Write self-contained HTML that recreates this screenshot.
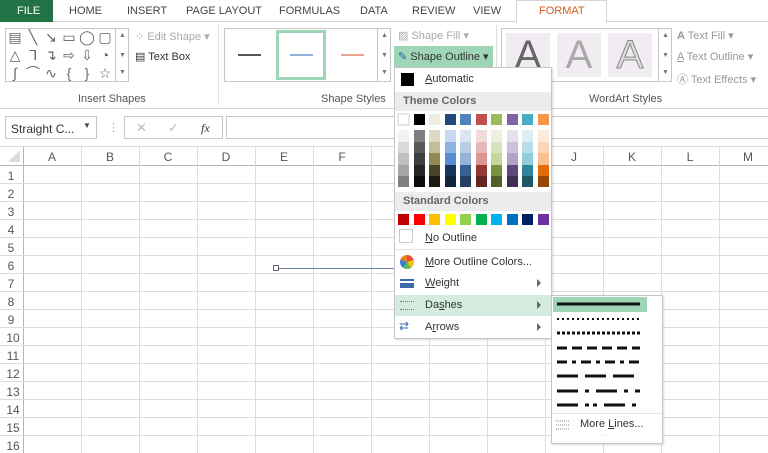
<!DOCTYPE html><html><head><meta charset="utf-8"><style>
*{margin:0;padding:0;box-sizing:border-box}
body{width:768px;height:453px;overflow:hidden;background:#fff;font-family:"Liberation Sans",sans-serif;position:relative;color:#444}
.a{position:absolute}
.t{font-size:11px;white-space:nowrap}
.mi{position:absolute;left:0;width:156px;height:21px;font-size:11px;color:#333}
.mi span.l{position:absolute;left:30px;top:4px}
.arr{position:absolute;left:142px;top:6px;width:0;height:0;border-left:4px solid #666;border-top:4px solid transparent;border-bottom:4px solid transparent}
.gi{position:absolute;width:18px;height:18px;font-size:14px;line-height:18px;text-align:center;color:#666}
.sb{position:absolute;font-size:7px;color:#777}
</style></head><body>
<!-- tabs -->
<div class="a" style="left:0;top:0;width:768px;height:22px;background:#fff;border-bottom:1px solid #d5d5d5"></div>
<div class="a" style="left:0;top:0;width:53px;height:22px;background:#217346"></div>
<div class="a t" style="left:17px;top:5px;color:#fff">FILE</div>
<div class="a t" style="left:69px;top:5px">HOME</div>
<div class="a t" style="left:127px;top:5px">INSERT</div>
<div class="a t" style="left:186px;top:5px">PAGE LAYOUT</div>
<div class="a t" style="left:279px;top:5px">FORMULAS</div>
<div class="a t" style="left:360px;top:5px">DATA</div>
<div class="a t" style="left:412px;top:5px">REVIEW</div>
<div class="a t" style="left:473px;top:5px">VIEW</div>
<div class="a" style="left:516px;top:0;width:91px;height:23px;background:#fff;border:1px solid #d5d5d5;border-bottom:none"></div>
<div class="a t" style="left:539px;top:5px;color:#d35c1f">FORMAT</div>
<!-- ribbon -->
<div class="a" style="left:0;top:108px;width:768px;height:1px;background:#d5d5d5"></div>
<div class="a" style="left:5px;top:28px;width:124px;height:54px;border:1px solid #c6c6c6"></div>
<div class="a" style="left:115px;top:28px;width:1px;height:54px;background:#c6c6c6"></div>
<div class="sb" style="left:119px;top:32px">▲</div><div class="sb" style="left:119px;top:52px">▼</div><div class="sb" style="left:119px;top:69px">▼</div>
<div class="gi" style="left:6px;top:28px">▤</div><div class="gi" style="left:24px;top:28px">╲</div><div class="gi" style="left:42px;top:28px">↘</div><div class="gi" style="left:60px;top:28px">▭</div><div class="gi" style="left:78px;top:28px">◯</div><div class="gi" style="left:96px;top:28px">▢</div>
<div class="gi" style="left:6px;top:46px">△</div><div class="gi" style="left:24px;top:46px">ᒣ</div><div class="gi" style="left:42px;top:46px">↴</div><div class="gi" style="left:60px;top:46px">⇨</div><div class="gi" style="left:78px;top:46px">⇩</div><div class="gi" style="left:96px;top:46px">◔</div>
<div class="gi" style="left:6px;top:64px">∫</div><div class="gi" style="left:24px;top:64px">⌒</div><div class="gi" style="left:42px;top:64px">∿</div><div class="gi" style="left:60px;top:64px">{</div><div class="gi" style="left:78px;top:64px">}</div><div class="gi" style="left:96px;top:64px">☆</div>
<div class="a t" style="left:135px;top:30px;color:#aaa">⁘ Edit Shape ▾</div>
<div class="a t" style="left:135px;top:50px;color:#333">▤ Text Box</div>
<div class="a t" style="left:78px;top:93px;color:#555">Insert Shapes</div>
<div class="a" style="left:218px;top:25px;width:1px;height:80px;background:#e0e0e0"></div>
<div class="a" style="left:224px;top:28px;width:167px;height:54px;border:1px solid #c6c6c6"></div>
<div class="a" style="left:377px;top:28px;width:1px;height:54px;background:#c6c6c6"></div>
<div class="sb" style="left:381px;top:32px">▲</div><div class="sb" style="left:381px;top:52px">▼</div><div class="sb" style="left:381px;top:69px">▼</div>
<div class="a" style="left:238px;top:54px;width:23px;height:2px;background:#555"></div>
<div class="a" style="left:276px;top:30px;width:50px;height:50px;border:3px solid #9fd5b7"></div>
<div class="a" style="left:290px;top:54px;width:23px;height:2px;background:#8eb2dc"></div>
<div class="a" style="left:341px;top:54px;width:23px;height:2px;background:#e8a490"></div>
<div class="a t" style="left:321px;top:93px;color:#555">Shape Styles</div>
<div class="a t" style="left:398px;top:29px;color:#aaa">▨ Shape Fill ▾</div>
<div class="a" style="left:394px;top:46px;width:99px;height:21px;background:#9fd5b7"></div>
<div class="a t" style="left:398px;top:50px;color:#333"><span style="color:#2a5caa">✎</span> Shape Outline ▾</div>
<div class="a" style="left:496px;top:25px;width:1px;height:80px;background:#e0e0e0"></div>
<div class="a" style="left:501px;top:28px;width:171px;height:54px;border:1px solid #c6c6c6"></div>
<div class="a" style="left:658px;top:28px;width:1px;height:54px;background:#c6c6c6"></div>
<div class="sb" style="left:662px;top:32px">▲</div><div class="sb" style="left:662px;top:52px">▼</div><div class="sb" style="left:662px;top:69px">▼</div>
<div class="a" style="left:506px;top:33px;width:44px;height:44px;background:#f1ecf1;font-size:40px;line-height:44px;text-align:center;color:#666">A</div>
<div class="a" style="left:557px;top:33px;width:44px;height:44px;background:#f1ecf1;font-size:40px;line-height:44px;text-align:center;color:#aaa">A</div>
<div class="a" style="left:608px;top:33px;width:44px;height:44px;background:#f1ecf1;font-size:40px;line-height:44px;text-align:center;color:#ddd;-webkit-text-stroke:1px #888">A</div>
<div class="a t" style="left:677px;top:29px;color:#999"><b>A</b> Text Fill ▾</div>
<div class="a t" style="left:677px;top:50px;color:#999"><u>A</u> Text Outline ▾</div>
<div class="a t" style="left:677px;top:71px;color:#999">Ⓐ Text Effects ▾</div>
<div class="a t" style="left:589px;top:93px;color:#555">WordArt Styles</div>
<!-- formula bar -->
<div class="a" style="left:5px;top:116px;width:92px;height:23px;border:1px solid #c6c6c6"></div>
<div class="a t" style="left:11px;top:122px;font-size:12px;color:#333">Straight C...</div>
<div class="a t" style="left:83px;top:121px;font-size:8px">▼</div>
<div class="a t" style="left:108px;top:121px;color:#aaa">⋮</div>
<div class="a" style="left:124px;top:116px;width:99px;height:23px;border:1px solid #c6c6c6"></div>
<div class="a t" style="left:136px;top:120px;color:#bbb;font-size:13px">✕</div>
<div class="a t" style="left:168px;top:120px;color:#bbb;font-size:13px">✓</div>
<div class="a t" style="left:201px;top:121px;color:#333;font-style:italic;font-family:'Liberation Serif',serif;font-size:12px">fx</div>
<div class="a" style="left:226px;top:116px;width:560px;height:23px;border:1px solid #c6c6c6"></div>
<!-- grid -->
<svg class="a" style="left:0;top:0" width="768" height="453">
<g stroke="#dadada" stroke-width="1">
<line x1="0" y1="146.5" x2="768" y2="146.5"/>
<line x1="0" y1="165.5" x2="768" y2="165.5" stroke="#b5b5b5"/>
<line x1="23.5" y1="147" x2="23.5" y2="453" stroke="#b5b5b5"/>
</g>
<g stroke="#dcdcdc">
<line x1="81.5" y1="147" x2="81.5" y2="453"/><line x1="139.5" y1="147" x2="139.5" y2="453"/><line x1="197.5" y1="147" x2="197.5" y2="453"/><line x1="255.5" y1="147" x2="255.5" y2="453"/><line x1="313.5" y1="147" x2="313.5" y2="453"/><line x1="371.5" y1="147" x2="371.5" y2="453"/><line x1="429.5" y1="147" x2="429.5" y2="453"/><line x1="487.5" y1="147" x2="487.5" y2="453"/><line x1="545.5" y1="147" x2="545.5" y2="453"/><line x1="603.5" y1="147" x2="603.5" y2="453"/><line x1="661.5" y1="147" x2="661.5" y2="453"/><line x1="719.5" y1="147" x2="719.5" y2="453"/>
<line x1="0" y1="183.5" x2="768" y2="183.5"/><line x1="0" y1="201.5" x2="768" y2="201.5"/><line x1="0" y1="219.5" x2="768" y2="219.5"/><line x1="0" y1="237.5" x2="768" y2="237.5"/><line x1="0" y1="255.5" x2="768" y2="255.5"/><line x1="0" y1="273.5" x2="768" y2="273.5"/><line x1="0" y1="291.5" x2="768" y2="291.5"/><line x1="0" y1="309.5" x2="768" y2="309.5"/><line x1="0" y1="327.5" x2="768" y2="327.5"/><line x1="0" y1="345.5" x2="768" y2="345.5"/><line x1="0" y1="363.5" x2="768" y2="363.5"/><line x1="0" y1="381.5" x2="768" y2="381.5"/><line x1="0" y1="399.5" x2="768" y2="399.5"/><line x1="0" y1="417.5" x2="768" y2="417.5"/><line x1="0" y1="435.5" x2="768" y2="435.5"/>
</g>
<polygon points="8,162 20,150 20,162" fill="#dcdcdc"/>
<g font-family="Liberation Sans" font-size="12" fill="#555" text-anchor="middle">
<text x="52" y="161">A</text><text x="110" y="161">B</text><text x="168" y="161">C</text><text x="226" y="161">D</text><text x="284" y="161">E</text><text x="342" y="161">F</text><text x="574" y="161">J</text><text x="632" y="161">K</text><text x="690" y="161">L</text><text x="748" y="161">M</text>
<text x="11" y="180">1</text><text x="11" y="198">2</text><text x="11" y="216">3</text><text x="11" y="234">4</text><text x="11" y="252">5</text><text x="11" y="270">6</text><text x="11" y="288">7</text><text x="11" y="306">8</text><text x="11" y="324">9</text><text x="13" y="342">10</text><text x="13" y="360">11</text><text x="13" y="378">12</text><text x="13" y="396">13</text><text x="13" y="414">14</text><text x="13" y="432">15</text><text x="13" y="450">16</text>
</g>
<line x1="279" y1="268.5" x2="395" y2="268.5" stroke="#6a84a8"/>
<rect x="273.5" y="265.5" width="5" height="5" fill="#fff" stroke="#666"/>
</svg>
<!-- menu -->
<div class="a" style="left:394px;top:67px;width:158px;height:272px;background:#fff;border:1px solid #c6c6c6;box-shadow:1px 1px 2px rgba(0,0,0,.15)">
 <div class="a" style="left:6px;top:5px;width:13px;height:13px;background:#000"></div>
 <div class="a t" style="left:30px;top:5px;color:#333"><u>A</u>utomatic</div>
 <div class="a" style="left:0;top:24px;width:156px;height:19px;background:#ececec"></div>
 <div class="a t" style="left:8px;top:27px;font-weight:bold;color:#666">Theme Colors</div>
 <div class="a" style="left:0;top:124px;width:156px;height:19px;background:#ececec"></div>
 <div class="a t" style="left:8px;top:127px;font-weight:bold;color:#666">Standard Colors</div>
 <div class="a" style="left:4px;top:161px;width:14px;height:14px;border:1px solid #ccc"></div>
 <div class="a t" style="left:30px;top:164px;color:#333"><u>N</u>o Outline</div>
 <div class="a" style="left:0;top:181px;width:156px;height:1px;background:#e3e3e3"></div>
 <div class="mi" style="top:184px"><div class="a" style="left:5px;top:3px;width:14px;height:14px;border-radius:50%;background:conic-gradient(#e74c3c 0 20%,#f1c40f 0 40%,#5cb85c 0 60%,#3a7bd5 0 80%,#e67e22 0)"></div><span class="l"><u>M</u>ore Outline Colors...</span></div>
 <div class="mi" style="top:205px"><div class="a" style="left:5px;top:6px;width:14px;height:9px;border-top:2px solid #3a6aa8;border-bottom:3px solid #3a6aa8"></div><div class="a" style="left:5px;top:10px;width:14px;height:2px;background:#3a6aa8"></div><span class="l"><u>W</u>eight</span><div class="arr"></div></div>
 <div class="mi" style="top:227px;background:#d3ecdf"><div class="a" style="left:5px;top:6px;width:14px;height:9px;border-top:1px dotted #777;border-bottom:1px dotted #777"></div><span class="l">Da<u>s</u>hes</span><div class="arr"></div></div>
 <div class="mi" style="top:249px"><span class="a" style="left:4px;top:2px;color:#3a6aa8;font-size:12px">⇄</span><span class="l">A<u>r</u>rows</span><div class="arr"></div></div>
</div>
<!-- submenu -->
<div class="a" style="left:551px;top:295px;width:112px;height:149px;background:#fff;border:1px solid #c6c6c6;box-shadow:1px 1px 2px rgba(0,0,0,.15)">
 <div class="a" style="left:1px;top:1px;width:94px;height:15px;background:#9fd5b7"></div>
 <svg class="a" style="left:0;top:0" width="110" height="147"><g stroke="#111">
 <line x1="5" y1="8" x2="88" y2="8" stroke-width="3"/>
 <line x1="5" y1="23" x2="88" y2="23" stroke-width="2" stroke-dasharray="2 3"/>
 <line x1="5" y1="37" x2="88" y2="37" stroke-width="3" stroke-dasharray="3 2"/>
 <line x1="5" y1="52" x2="88" y2="52" stroke-width="3" stroke-dasharray="10 5"/>
 <line x1="5" y1="66" x2="88" y2="66" stroke-width="3" stroke-dasharray="10 5 4 5"/>
 <line x1="5" y1="80" x2="88" y2="80" stroke-width="3" stroke-dasharray="21 7"/>
 <line x1="5" y1="95" x2="88" y2="95" stroke-width="3" stroke-dasharray="21 7 4 7"/>
 <line x1="5" y1="109" x2="88" y2="109" stroke-width="3" stroke-dasharray="21 7 4 4 4 7"/>
 </g><line x1="0" y1="117.5" x2="110" y2="117.5" stroke="#e3e3e3"/>
 <g stroke="#888" stroke-dasharray="1 1"><line x1="4" y1="125" x2="17" y2="125"/><line x1="4" y1="129" x2="17" y2="129"/><line x1="4" y1="133" x2="17" y2="133"/></g></svg>
 <div class="a t" style="left:28px;top:122px;color:#333">More <u>L</u>ines...</div>
 <div class="a t" style="left:46px;top:136px;color:#bbb;font-size:7px">····</div>
</div>
<svg class="a" style="left:0;top:0;pointer-events:none" width="768" height="453">
<g>
<rect x="398" y="114" width="11" height="11" fill="#fff" stroke="#ccc"/>
<rect x="414" y="114" width="11" height="11" fill="#000"/>
<rect x="429" y="114" width="11" height="11" fill="#eeece1"/>
<rect x="445" y="114" width="11" height="11" fill="#1f497d"/>
<rect x="460" y="114" width="11" height="11" fill="#4f81bd"/>
<rect x="476" y="114" width="11" height="11" fill="#c0504d"/>
<rect x="491" y="114" width="11" height="11" fill="#9bbb59"/>
<rect x="507" y="114" width="11" height="11" fill="#8064a2"/>
<rect x="522" y="114" width="11" height="11" fill="#4bacc6"/>
<rect x="538" y="114" width="11" height="11" fill="#f79646"/>
</g>
<g>
<rect x="398" y="214" width="11" height="11" fill="#c00000"/>
<rect x="414" y="214" width="11" height="11" fill="#ff0000"/>
<rect x="429" y="214" width="11" height="11" fill="#ffc000"/>
<rect x="445" y="214" width="11" height="11" fill="#ffff00"/>
<rect x="460" y="214" width="11" height="11" fill="#92d050"/>
<rect x="476" y="214" width="11" height="11" fill="#00b050"/>
<rect x="491" y="214" width="11" height="11" fill="#00b0f0"/>
<rect x="507" y="214" width="11" height="11" fill="#0070c0"/>
<rect x="522" y="214" width="11" height="11" fill="#002060"/>
<rect x="538" y="214" width="11" height="11" fill="#7030a0"/>
</g>
<!-- shade blocks -->
<g>
<rect x="398" y="130" width="11" height="12" fill="#f2f2f2"/><rect x="398" y="142" width="11" height="11" fill="#d9d9d9"/><rect x="398" y="153" width="11" height="12" fill="#bfbfbf"/><rect x="398" y="165" width="11" height="11" fill="#a6a6a6"/><rect x="398" y="176" width="11" height="11" fill="#808080"/>
<rect x="414" y="130" width="11" height="12" fill="#7f7f7f"/><rect x="414" y="142" width="11" height="11" fill="#595959"/><rect x="414" y="153" width="11" height="12" fill="#3f3f3f"/><rect x="414" y="165" width="11" height="11" fill="#262626"/><rect x="414" y="176" width="11" height="11" fill="#0d0d0d"/>
<rect x="429" y="130" width="11" height="12" fill="#ddd9c3"/><rect x="429" y="142" width="11" height="11" fill="#c4bd97"/><rect x="429" y="153" width="11" height="12" fill="#938953"/><rect x="429" y="165" width="11" height="11" fill="#494429"/><rect x="429" y="176" width="11" height="11" fill="#1d1b10"/>
<rect x="445" y="130" width="11" height="12" fill="#c6d9f0"/><rect x="445" y="142" width="11" height="11" fill="#8db3e2"/><rect x="445" y="153" width="11" height="12" fill="#548dd4"/><rect x="445" y="165" width="11" height="11" fill="#17365d"/><rect x="445" y="176" width="11" height="11" fill="#0f243e"/>
<rect x="460" y="130" width="11" height="12" fill="#dbe5f1"/><rect x="460" y="142" width="11" height="11" fill="#b8cce4"/><rect x="460" y="153" width="11" height="12" fill="#95b3d7"/><rect x="460" y="165" width="11" height="11" fill="#366092"/><rect x="460" y="176" width="11" height="11" fill="#244061"/>
<rect x="476" y="130" width="11" height="12" fill="#f2dcdb"/><rect x="476" y="142" width="11" height="11" fill="#e5b9b7"/><rect x="476" y="153" width="11" height="12" fill="#d99694"/><rect x="476" y="165" width="11" height="11" fill="#953734"/><rect x="476" y="176" width="11" height="11" fill="#632423"/>
<rect x="491" y="130" width="11" height="12" fill="#ebf1dd"/><rect x="491" y="142" width="11" height="11" fill="#d7e3bc"/><rect x="491" y="153" width="11" height="12" fill="#c3d69b"/><rect x="491" y="165" width="11" height="11" fill="#76923c"/><rect x="491" y="176" width="11" height="11" fill="#4f6128"/>
<rect x="507" y="130" width="11" height="12" fill="#e5e0ec"/><rect x="507" y="142" width="11" height="11" fill="#ccc1d9"/><rect x="507" y="153" width="11" height="12" fill="#b2a2c7"/><rect x="507" y="165" width="11" height="11" fill="#5f497a"/><rect x="507" y="176" width="11" height="11" fill="#3f3151"/>
<rect x="522" y="130" width="11" height="12" fill="#dbeef3"/><rect x="522" y="142" width="11" height="11" fill="#b7dde8"/><rect x="522" y="153" width="11" height="12" fill="#92cddc"/><rect x="522" y="165" width="11" height="11" fill="#31859b"/><rect x="522" y="176" width="11" height="11" fill="#205867"/>
<rect x="538" y="130" width="11" height="12" fill="#fdeada"/><rect x="538" y="142" width="11" height="11" fill="#fbd5b5"/><rect x="538" y="153" width="11" height="12" fill="#fac08f"/><rect x="538" y="165" width="11" height="11" fill="#e36c09"/><rect x="538" y="176" width="11" height="11" fill="#974806"/>
</g>
</svg>
</body></html>
